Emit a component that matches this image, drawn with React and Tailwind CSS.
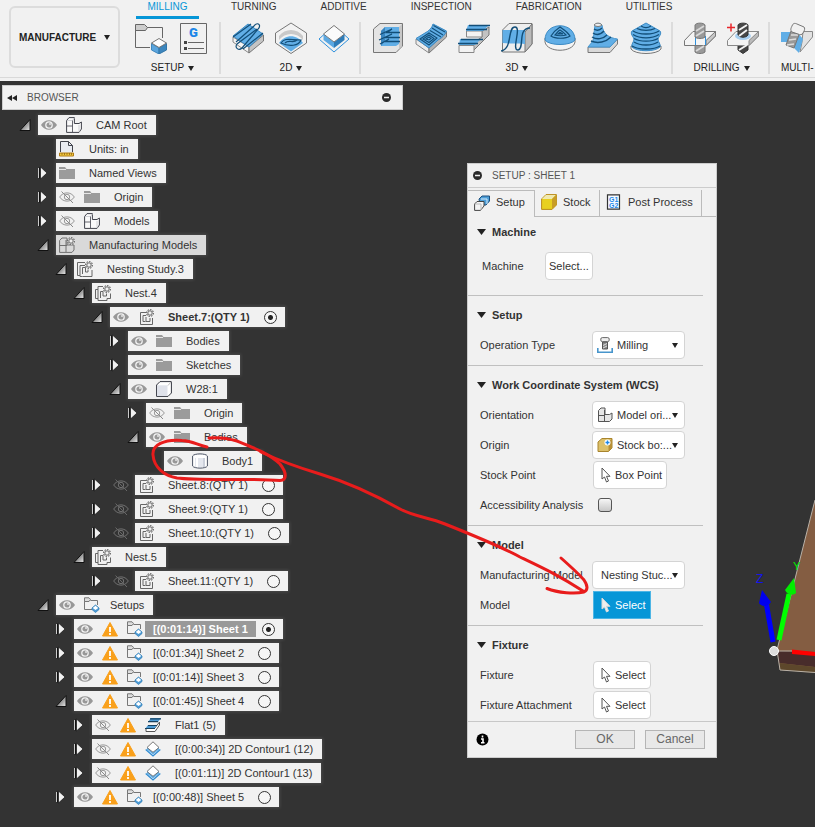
import { useState } from "react";

const tabs = ["MILLING", "TURNING", "ADDITIVE", "INSPECTION", "FABRICATION", "UTILITIES"];

function Svg({ size = 32, children }) {
  return (
    <svg width={size} height={size} viewBox={`0 0 ${size} ${size}`} fill="none" className="block shrink-0" aria-hidden="true">
      {children}
    </svg>
  );
}

/* ---------- toolbar icons (32px) ---------- */

function NewSetupIcon() {
  return (
    <Svg>
      <path d="M12 5.500H27.500V16M.5 5.500V25.500H15" stroke="#666" />
      <path d="M.5 2.500H9.500L12.500 5.500 10.500 8.500H.5Z" fill="#ccc" stroke="#666" />
      <path d="M16.500 21.500 24 26V32L16.500 28Z" fill="#5ba5dd" stroke="#3f87bd" />
      <path d="M31.500 21.500 24 26V32L31.500 28Z" fill="#3d86bd" stroke="#3276a8" />
      <path d="M16.500 21 24 16.500 31.500 21 24 25.500Z" fill="#fff" stroke="#777" />
    </Svg>
  );
}

function NcProgramIcon() {
  return (
    <Svg>
      <path d="M2.500 1.500H28.500V31.500H2.500Z" stroke="#666" />
      <text x="11" y="15" fontSize="13" fontWeight="900" fontFamily="Roboto, sans-serif" fill="#1c87e8">G</text>
      <path d="M6 19h3v3H6zM6 25h3v3H6z" fill="#444" />
      <path d="M10 20.500H26M10 26.500H26" stroke="#666" />
    </Svg>
  );
}

function FaceIcon() {
  return (
    <Svg>
      <path d="M1 15 17 25V31L1 20Z" fill="#f4f4f4" stroke="#888" />
      <path d="M17 25 31.500 13V19L17 31Z" fill="#c4c4c4" stroke="#777" />
      <path d="M1 14 16 2 31 12 17 25Z" fill="#61aee6" stroke="#3b8ac4" />
      <path d="M1 15 19 2M4 20 22 4C25 0 29 2 27 6L10 26C7 29 2 26 5 22L25 7M11 27 31 11" stroke="#124e78" strokeWidth="1.200" />
    </Svg>
  );
}

function PocketIcon() {
  return (
    <Svg>
      <path d="M16 1 31.500 11V21L16 31.500.5 21V11Z" fill="#f2f2f2" stroke="#777" />
      <path d="M4 14C10 6 22 6 28 14V18C22 10 10 10 4 18Z" fill="#c9c9c9" />
      <path d="M4 21C10 12 22 12 28 21L16 29.500Z" fill="#61aee6" />
      <path d="M6 21C10 15 15 18 26 18 24 24 14 25 6 21ZM10 21C14 17 18 22 22 18" stroke="#124e78" strokeWidth="1.200" />
    </Svg>
  );
}

function ContourIcon() {
  return (
    <Svg>
      <path d="M6 12.500 1 17 16 30 31 17 26 12.500" stroke="#2e90dc" />
      <path d="M5.500 12 16 20V26L5.500 18Z" fill="#5ba8e2" />
      <path d="M26.500 12 16 20V26L26.500 18Z" fill="#2e7cb8" />
      <path d="M5.500 12 16 3.500 26.500 12 16 20Z" fill="#fbfbfb" stroke="#777" />
    </Svg>
  );
}

function AdaptiveIcon() {
  return (
    <Svg>
      <path d="M1.500 7 8 1.500H30.500V24L24 30.500H1.500Z" fill="#e4e4e4" stroke="#777" />
      <path d="M30 2V24L27 27V5Z" fill="#c8c8c8" />
      <path d="M9 9 13 5H27V22L24 24H9Z" fill="#61aee6" />
      <path d="M9 9V24L13 19V5Z" fill="#3a86c0" />
      <path d="M28 10.500H15L20 7 8 12.500M28 15.500H13L20 12 7 18M28 19.500H13L17 17 8 22" stroke="#124e78" strokeWidth="1.300" />
    </Svg>
  );
}

function SteepIcon() {
  return (
    <Svg>
      <path d="M1 17 14 26V31L1 22Z" fill="#ececec" stroke="#888" />
      <path d="M14 26 31.500 10V15L14 31Z" fill="#b4b4b4" stroke="#777" />
      <path d="M1 16.500 10 11C14 9 17 6 18 2L31.500 9C30 13 27 16 23 18L14 26Z" fill="#61aee6" stroke="#3b8ac4" />
      <path d="M5 17 14 11 22 16 14 23ZM8 17 14 13 19 16.500 14 20.500ZM11 17 14 15 16 16.500 14 18ZM17 6 28 13M18.500 3.500 30 10M15 8.500 26 15" stroke="#124e78" strokeWidth="1.100" />
    </Svg>
  );
}

function FlatIcon() {
  return (
    <Svg>
      <path d="M31 5V13L14 30V24L18 19 24 15V9Z" fill="#c2c2c2" stroke="#777" />
      <path d="M8.500 9H24V15H8.500ZM1 23.500H16V30.500H1Z" fill="#f3f3f3" stroke="#888" />
      <path d="M10 3H31L25 9H8ZM2 17H23L17 23H1Z" fill="#61aee6" />
      <path d="M11 3.500H32M8 7.500H29M3 17.500H25M0 21.500H20" stroke="#124e78" strokeWidth="1.500" />
    </Svg>
  );
}

function ParallelIcon() {
  return (
    <Svg>
      <path d="M1.500 8 8 1.500H31V22L24 30H1.500Z" fill="#eee" stroke="#777" />
      <path d="M31 2V22L24 30V10Z" fill="#bababa" stroke="#777" />
      <path d="M1.500 8H24V22C16 21 10 22 1.500 21Z" fill="#61aee6" />
      <path d="M0 29C12 27 6 5 14 5 21 5 10 28 17 28 24 27 16 6 29 6" stroke="#124e78" strokeWidth="1.400" />
    </Svg>
  );
}

function ScallopIcon() {
  return (
    <Svg>
      <path d="M1 16V20C3 31 29 31 31 20V16Z" fill="#f4f4f4" stroke="#777" />
      <path d="M1 18C1-1 31-1 31 18 27 24 5 24 1 18Z" fill="#61aee6" stroke="#3b8ac4" />
      <path d="M7 14C10 9 13 7 16 5 19 7 23 9 26 14 22 17 11 17 7 14ZM11 13C13 11 14 9 16 8 18 9 20 11 22 13 20 14 13 14 11 13ZM14 12 16 10.500 19 12Z" stroke="#124e78" strokeWidth="1.200" />
    </Svg>
  );
}

function SpiralIcon() {
  return (
    <Svg>
      <path d="M1 25V30.500H23L30.500 22V17L23 25Z" fill="#d9d9d9" stroke="#777" />
      <path d="M1 25 6 19 8 3C10 1 13 1 15 3 16 12 22 16 30.500 17L23 25Z" fill="#61aee6" stroke="#4796cf" />
      <path d="M7 3C9 .5 13 .5 15 3 13 5 9 5 7 3Z" fill="#eee" stroke="#777" />
      <path d="M7 7C10 9 13 8 15 6M6 11C10 14 14 12 17 9M5 15C10 18 16 17 20 13M4 19C11 22 19 20 24 15" stroke="#124e78" strokeWidth="1.400" />
    </Svg>
  );
}

function RampIcon() {
  return (
    <Svg>
      <path d="M1 24V27C5 33 27 33 31 27V24Z" fill="#f1f1f1" stroke="#777" />
      <path d="M16 1 30 9C32 12 29 14 28 17 28 20 31 22 30 25 25 30 7 30 2 25 1 22 4 20 4 17 3 14 0 12 2 9Z" fill="#61aee6" stroke="#3b8ac4" />
      <path d="M11 4C14 6 18 6 21 4M7 6.500C12 9 20 9 25 6.500M3 9C9 13 23 13 29 9M3 12.500C10 17 22 17 29 12.500M4 16.500C10 20 22 20 28 16.500M4 20C10 24 22 24 28 20M2 24C8 28 24 28 30 24" stroke="#124e78" strokeWidth="1.300" />
    </Svg>
  );
}

function DrillIcon() {
  return (
    <Svg>
      <path d="M11 22H21V30C19 32 13 32 11 30Z" fill="#999" stroke="#777" />
      <path d="M.5 18.500 9 9.500H31.500V14L22 23.500H.5Z" fill="#f4f4f4" stroke="#777" />
      <path d="M22 18.500V23.500L31.500 14V9.500Z" fill="#c8c8c8" stroke="#777" />
      <path d="M11.500 14V23M21.500 14V23" stroke="#2e90dc" />
      <path d="M11 3C12 .5 20 .5 21 3V15C19 17 13 17 11 15Z" fill="#999" stroke="#777" />
      <path d="M12 9 20 4M12 14 20 9M12 29 20 24" stroke="#d8d8d8" strokeWidth="1.800" />
    </Svg>
  );
}

function HoleIcon() {
  return (
    <Svg>
      <path d="M11 22H21V28L16 31.500 11 28Z" fill="#444" stroke="#333" />
      <path d="M.5 18.500 9 9.500H31.500V14L22 23.500H.5Z" fill="#f4f4f4" stroke="#888" />
      <path d="M22 18.500V23.500L31.500 14V9.500Z" fill="#bbb" stroke="#888" />
      <ellipse cx="16" cy="14" rx="8" ry="4" fill="#a8cff0" />
      <path d="M11 3C12 .5 20 .5 21 3V13C19 16 13 16 11 13Z" fill="#474747" stroke="#333" />
      <path d="M12 8 20 3M12 14 20 8M12 28 20 23" stroke="#f3f3f3" strokeWidth="2" />
      <path d="M0 5.500H8M4 1.500V9.500" stroke="#e8262b" strokeWidth="1.500" />
    </Svg>
  );
}

function MultiAxisIcon() {
  return (
    <Svg>
      <path d="M22 9.500H31.500V15L19 30 21 20Z" fill="#e2e2e2" stroke="#888" />
      <path d="M0 10H16L22 17 18 31 10 23 8 20H0Z" fill="#61aee6" />
      <path d="M10 9 18 13 13 26 5 23Z" fill="#999" stroke="#777" />
      <path d="M8 18 15 17M6 23 13 22M10 13 17 13" stroke="#ddd" strokeWidth="1.500" />
      <path d="M11 4C12 1 14 1 16 2L23 5C24 6 24 8 22 11 21 13 19 13 17 12L11 10C9 8 10 6 11 4Z" fill="#f1f1f1" stroke="#777" />
    </Svg>
  );
}

/* ---------- browser tree icons (16px) ---------- */

function EyeIcon() {
  return (
    <Svg size={16}>
      <path d="M0 8C3.500 1.700 12.500 1.700 16 8 12.500 14.300 3.500 14.300 0 8Z" fill="#989898" />
      <circle cx="8" cy="8" r="3.200" fill="#989898" stroke="#f1f1f1" strokeWidth="1.300" />
      <circle cx="9" cy="7" r="1" fill="#e4e4e4" />
    </Svg>
  );
}

function EyeOffIcon() {
  return (
    <Svg size={16}>
      <path d="M.7 8C4 2.500 12 2.500 15.300 8 12 13.500 4 13.500.7 8Z" stroke="#999" />
      <circle cx="8" cy="8" r="2.700" stroke="#999" />
      <path d="M2.500 2.500 14 14" stroke="#8a8a8a" />
    </Svg>
  );
}

function FolderIcon() {
  return (
    <Svg size={16}>
      <path d="M0 2H6L7.500 4H16V14H0Z" fill="#9b9b9b" />
      <path d="M0 4.500H7" stroke="#e7e7e7" />
    </Svg>
  );
}

function ComponentIcon() {
  return (
    <Svg size={16}>
      <path d="M.6 3.500 3 .6H8.400V6.500H13L15.400 5V12L13 15.400H.6Z" fill="#fafafa" stroke="#41434c" strokeLinejoin="round" />
      <path d="M6.500 3V15M.6 9H6.500" stroke="#41434c" strokeWidth=".8" />
      <path d="M13 8V15M1 3.500H6.500L8.400 1" stroke="#c5c7cd" strokeWidth=".8" />
    </Svg>
  );
}

function UnitsIcon() {
  return (
    <Svg size={16}>
      <path d="M1.500 11V.5H9.500L13.500 4.500V11" fill="#e8ebf1" stroke="#41434c" />
      <path d="M9.500.5V4.500H13.500" stroke="#41434c" />
      <path d="M.5 12H14.500V15H.5Z" fill="#f1cb42" stroke="#b07a12" />
      <path d="M3 12V14M5.500 12V14M8 12V14M10.500 12V14M12.500 12V14" stroke="#8a5d0a" strokeWidth=".7" />
    </Svg>
  );
}

function Gear() {
  return (
    <>
      <circle cx="12" cy="4" r="3.400" fill="#f1f1f1" stroke="#6a6a6a" strokeWidth="1.200" strokeDasharray="1.600 1" />
      <circle cx="12" cy="4" r="2.200" fill="#f1f1f1" stroke="#6a6a6a" />
    </>
  );
}

function MfgModelsIcon() {
  return (
    <Svg size={16}>
      <path d="M.6 3.500 3 1H8V8H15V13L13 15.400H.6ZM.6 8.500H8M7 3V15" stroke="#707070" strokeLinejoin="round" />
      <Gear />
    </Svg>
  );
}

function StudyIcon() {
  return (
    <Svg size={16}>
      <path d="M3 14.500H.5V1.500H8M5.500 15.500H3V4.500H8M5.500 13V6.500H8.500V11H11V8.500M5.500 15.500H15V9" stroke="#666" />
      <Gear />
    </Svg>
  );
}

function NestIcon() {
  return (
    <Svg size={16}>
      <path d="M3 13.500H.5V4.500H3V1.500H8M3 4.500V15.500H12V13.500H15.500V8.500M5.500 13V6.500H8V11H11.500V8.500" stroke="#666" />
      <Gear />
    </Svg>
  );
}

function SheetIcon() {
  return (
    <Svg size={16}>
      <path d="M8 3.500H2.500V15.500H14.500V9M7.500 12.500H5V6.500H8M8 8V12.500H12V9" stroke="#666" />
      <Gear />
    </Svg>
  );
}

function BoxIcon() {
  return (
    <Svg size={16}>
      <path d="M.6 4 4 .6H15.400V12L12 15.400H.6Z" fill="#fff" stroke="#33363f" strokeLinejoin="round" />
      <path d="M1 4.300H11.500V15H1Z" fill="#dfe2ea" />
      <path d="M12 4.500 15.400.6" stroke="#bbb" />
    </Svg>
  );
}

function BodyIcon() {
  return (
    <Svg size={16}>
      <path d="M.6 3C2 .2 14 .2 15.400 3V13C14 15.800 2 15.800.6 13Z" fill="#fff" stroke="#4b5364" />
      <path d="M3 5H13V14H3Z" fill="#e4e7ee" />
      <path d="M5 5V14" stroke="#fff" strokeWidth="2" />
      <path d="M12 5V14" stroke="#b4bbc8" />
    </Svg>
  );
}

function SetupIcon() {
  return (
    <Svg size={16}>
      <path d="M6.500 3.500H13.500V8M.5 4V12.500H8" stroke="#777" />
      <path d="M.5.800H5L6.500 2.500 5 4.500H.5Z" fill="#ddd" stroke="#777" />
      <path d="M8 11 11.500 8 15 11V12.500L11.500 15.500 8 12.500Z" fill="#4c9bd6" stroke="#3480b8" strokeWidth=".8" />
      <path d="M8.800 11 11.500 8.800 14.200 11 11.500 13Z" fill="#fff" />
    </Svg>
  );
}

function WarningIcon() {
  return (
    <Svg size={16}>
      <path d="M8 1.500 15.500 15H.5Z" fill="#f9a01b" stroke="#f9a01b" strokeLinejoin="round" />
      <path d="M8 6V11M8 12V14" stroke="#fff" strokeWidth="1.800" />
    </Svg>
  );
}

function FlatOpIcon() {
  return (
    <Svg size={16}>
      <path d="M1 11.500H9.500L14.500 5V8L10 14.500H1Z" fill="#fff" stroke="#555" />
      <path d="M6 1H16L13 5H3ZM3 8H12L9 12H0Z" fill="#4c9bd6" />
      <path d="M5 1.800H16M3 4.700H13M3 8.500H12M0 11.500H10" stroke="#17415f" strokeWidth="1.200" />
    </Svg>
  );
}

function ContourOpIcon() {
  return (
    <Svg size={16}>
      <path d="M.7 8.500 8 15 15.300 8.500" stroke="#2e8bd2" strokeWidth="1.300" />
      <path d="M2 6V8.500L8 13.500 14 8.500V6" fill="#5faee8" />
      <path d="M2 6.500 8 .8 14 6.500 8 11.300Z" fill="#fff" stroke="#777" />
    </Svg>
  );
}

/* ---------- small shared glyphs ---------- */

function DownArrow({ className = "w-[6px] h-[5px]" }) {
  return (
    <svg viewBox="0 0 8 6" className={`${className} shrink-0`} preserveAspectRatio="none" aria-hidden="true">
      <path d="M0 0H8L4 6Z" fill="#222" />
    </svg>
  );
}

function MinusDot() {
  return (
    <svg width="9" height="9" viewBox="0 0 9 9" aria-hidden="true">
      <circle cx="4.500" cy="4.500" r="4.500" fill="#2b2b2b" />
      <path d="M2 4.500H7" stroke="#f1f1f1" strokeWidth="1.500" />
    </svg>
  );
}

function CursorIcon({ active }) {
  return (
    <svg width="10" height="16" viewBox="0 0 10 16" className="shrink-0" aria-hidden="true">
      <path d="M1 1V12L3.500 10 5.500 15 7.500 14 5.500 9.300H9Z" fill={active ? "#eee" : "#fff"} stroke={active ? "#d8d8d8" : "#555"} />
    </svg>
  );
}

const groups = [
  { label: "SETUP", icons: [NewSetupIcon, NcProgramIcon] },
  { label: "2D", icons: [FaceIcon, PocketIcon, ContourIcon] },
  { label: "3D", icons: [AdaptiveIcon, SteepIcon, FlatIcon, ParallelIcon, ScallopIcon, SpiralIcon, RampIcon] },
  { label: "DRILLING", icons: [DrillIcon, HoleIcon] },
];

function Toolbar() {
  return (
    <header className="flex bg-[#f1f1f1] pb-[3px] overflow-hidden">
      <div className="flex flex-1 min-w-0 border-b border-[#d9d9d9] h-[78px]">
        <button className="ml-[9px] mt-[6px] w-[111px] h-[62px] shrink-0 rounded-md border-2 border-[#dcdcdc] flex items-center justify-center gap-2 text-[10px] font-bold text-[#222]">
          MANUFACTURE
          <DownArrow />
        </button>
        <div className="flex-1 min-w-0 pl-[15px]">
          <nav className="flex gap-11 h-[19px] pl-px text-[10px] leading-[14px]">
            {tabs.map((t, i) => (
              <a
                key={t}
                href="#"
                className={
                  i === 0
                    ? "w-[63px] -mr-3 text-center text-[#0696d7] border-b-[3px] border-[#0696d7]"
                    : "text-[#333]"
                }
              >
                {t}
              </a>
            ))}
          </nav>
          <div className="flex pt-[3px]">
            {groups.map((g) => (
              <div key={g.label} className="shrink-0 border-r-2 border-[#dcdcdc] pr-[9px] mr-[11px] h-[52px]">
                <div className="flex gap-[11px]">
                  {g.icons.map((Icon, i) => (
                    <button key={i} aria-label={`${g.label} ${i + 1}`}>
                      <Icon />
                    </button>
                  ))}
                </div>
                <button className="mx-auto flex items-center gap-1 pt-[7px] text-[10px] leading-[14px] text-[#222]">
                  {g.label}
                  <DownArrow />
                </button>
              </div>
            ))}
            <div className="shrink-0">
              <button aria-label="Multi-axis" className="block">
                <MultiAxisIcon />
              </button>
              <div className="pt-[7px] text-[10px] leading-[14px] text-[#222]">MULTI-</div>
            </div>
          </div>
        </div>
      </div>
    </header>
  );
}

const E = EyeIcon;
const H = EyeOffIcon;
const W = WarningIcon;

const tree = {
  label: "CAM Root", icons: [E, ComponentIcon], open: true,
  children: [
    { label: "Units: in", icons: [UnitsIcon] },
    { label: "Named Views", icons: [FolderIcon], open: false },
    { label: "Origin", icons: [H, FolderIcon], open: false },
    { label: "Models", icons: [H, ComponentIcon], open: false },
    {
      label: "Manufacturing Models", icons: [MfgModelsIcon], open: true, shaded: true,
      children: [
        {
          label: "Nesting Study.3", icons: [StudyIcon], open: true,
          children: [
            {
              label: "Nest.4", icons: [NestIcon], open: true,
              children: [
                {
                  label: "Sheet.7:(QTY 1)", icons: [E, SheetIcon], open: true, bold: true, radio: "sheet", on: true,
                  children: [
                    { label: "Bodies", icons: [E, FolderIcon], open: false },
                    { label: "Sketches", icons: [E, FolderIcon], open: false },
                    {
                      label: "W28:1", icons: [E, BoxIcon], open: true,
                      children: [
                        { label: "Origin", icons: [H, FolderIcon], open: false },
                        {
                          label: "Bodies", icons: [E, FolderIcon], open: true,
                          children: [{ label: "Body1", icons: [E, BodyIcon] }],
                        },
                      ],
                    },
                  ],
                },
                { label: "Sheet.8:(QTY 1)", icons: [SheetIcon], open: false, off: true, radio: "sheet" },
                { label: "Sheet.9:(QTY 1)", icons: [SheetIcon], open: false, off: true, radio: "sheet" },
                { label: "Sheet.10:(QTY 1)", icons: [SheetIcon], open: false, off: true, radio: "sheet" },
              ],
            },
            {
              label: "Nest.5", icons: [NestIcon], open: true,
              children: [{ label: "Sheet.11:(QTY 1)", icons: [SheetIcon], open: false, off: true, radio: "sheet" }],
            },
          ],
        },
      ],
    },
    {
      label: "Setups", icons: [E, SetupIcon], open: true, tight: true,
      children: [
        { label: "[(0:01:14)] Sheet 1", icons: [E, W, SetupIcon], open: false, tight: true, bold: true, selected: true, radio: "setup", on: true },
        { label: "[(0:01:34)] Sheet 2", icons: [E, W, SetupIcon], open: false, tight: true, radio: "setup" },
        { label: "[(0:01:14)] Sheet 3", icons: [E, W, SetupIcon], open: false, tight: true, radio: "setup" },
        {
          label: "[(0:01:45)] Sheet 4", icons: [E, W, SetupIcon], open: true, tight: true, radio: "setup",
          children: [
            { label: "Flat1 (5)", icons: [H, W, FlatOpIcon], open: false },
            { label: "[(0:00:34)] 2D Contour1 (12)", icons: [H, W, ContourOpIcon], open: false },
            { label: "[(0:01:11)] 2D Contour1 (13)", icons: [H, W, ContourOpIcon], open: false },
          ],
        },
        { label: "[(0:00:48)] Sheet 5", icons: [E, W, SetupIcon], open: false, tight: true, radio: "setup" },
      ],
    },
  ],
};

function Caret({ open }) {
  return (
    <svg width="12" height="14" viewBox="0 0 12 14" aria-hidden="true">
      <defs>
        <linearGradient id="caretFill" x1="0" y1="0" x2="1" y2="1">
          <stop offset="0.3" stopColor="#666" />
          <stop offset="1" stopColor="#eee" />
        </linearGradient>
      </defs>
      {open ? (
        <path d="M11 1.500V12.500H1Z" fill="url(#caretFill)" stroke="#111" />
      ) : (
        <>
          <path d="M3.500 1V13L10 7Z" fill="#f1f1f1" stroke="#111" strokeWidth=".7" />
          <path d="M1.500 2V12" stroke="#ccc" />
          <path d="M2.500 1.500V12.500" stroke="#111" />
        </>
      )}
    </svg>
  );
}

function TreeNode({ node, path }) {
  const [open, setOpen] = useState(node.open);
  const id = `node-${path}`;
  return (
    <li>
      <div className="flex items-center h-6">
        <div className="w-[19px] shrink-0">
          {node.open !== undefined && (
            <button className="block" aria-label={`Toggle ${node.label}`} onClick={() => setOpen(!open)}>
              <Caret open={open} />
            </button>
          )}
        </div>
        {node.off && (
          <div className="pl-[3px] pr-[6px] opacity-60">
            <EyeOffIcon />
          </div>
        )}
        <div
          className={`flex items-center h-5 pl-[3px] whitespace-nowrap shadow-[0_0_3px_1px_rgba(255,255,255,0.12)] ${
            node.shaded ? "bg-[#d9d9d9]" : "bg-[#f1f1f1]"
          }`}
        >
          <div className="flex gap-[9px]">
            {node.icons.map((Icon, i) => (
              <Icon key={i} />
            ))}
          </div>
          <label
            htmlFor={node.radio ? id : undefined}
            className={`px-2 leading-4 ${node.tight ? "ml-[2px]" : "ml-[6px]"} ${node.bold ? "font-bold" : ""} ${
              node.selected ? "bg-[#999] text-white" : "text-[#333]"
            }`}
          >
            {node.label}
          </label>
          {node.radio ? (
            <input
              id={id}
              type="radio"
              name={node.radio}
              defaultChecked={node.on}
              className="appearance-none w-[13px] h-[13px] ml-[6px] mr-2 rounded-full border border-[#333] bg-[#f6f6f6] checked:bg-[radial-gradient(circle,#222_2px,#f6f6f6_3px)]"
            />
          ) : (
            <span className="w-px" />
          )}
        </div>
      </div>
      {open && node.children && (
        <ul className="pl-[18px]">
          {node.children.map((c, i) => (
            <TreeNode key={i} node={c} path={`${path}-${i}`} />
          ))}
        </ul>
      )}
    </li>
  );
}

function Browser() {
  return (
    <aside className="w-[403px] shrink-0 pt-1">
      <div className="ml-[2px] h-[25px] flex items-center bg-[#f1f1f1] border border-[#ccc] pl-1 pr-[11px] text-[10px] text-[#555]">
        <button aria-label="Collapse browser" className="mr-[10px]">
          <svg width="10" height="6" viewBox="0 0 10 6" aria-hidden="true">
            <path d="M5 0V6L0 3ZM10 0V6L5 3Z" fill="#222" />
          </svg>
        </button>
        <span className="flex-1">BROWSER</span>
        <button aria-label="Minimize">
          <MinusDot />
        </button>
      </div>
      <ul className="pl-[19px] pt-[3px]">
        <TreeNode node={tree} path="0" />
      </ul>
    </aside>
  );
}

function Section({ title, className = "pt-1 pb-[5px] border-b", children }) {
  return (
    <section className={`mr-[13px] border-[#c0c0c0] ${className}`}>
      <h3 className="h-[30px] flex items-center gap-[6px] pl-[9px] font-bold">
        <DownArrow className="w-[9px] h-[6px]" />
        {title}
      </h3>
      {children}
    </section>
  );
}

function Field({ label, id, children }) {
  return (
    <div className="flex items-center h-[30px] pl-3">
      <label htmlFor={id} className="w-[112px] shrink-0 whitespace-nowrap">
        {label}
      </label>
      {children}
    </div>
  );
}

function Dropdown({ id, icon, value }) {
  return (
    <div className="relative w-[93px] h-7 flex items-center rounded-sm border border-[#d4d4d4] bg-white pl-1">
      {icon}
      <select id={id} className="appearance-none bg-transparent flex-1 min-w-0 h-full outline-none pl-1">
        <option>{value}</option>
      </select>
      <DownArrow className="w-[6px] h-[5px] absolute right-[6px] pointer-events-none" />
    </div>
  );
}

function PickButton({ id, active, children }) {
  return (
    <button
      id={id}
      className={`ml-px h-7 flex items-center gap-1 pl-[7px] pr-1 border ${
        active ? "bg-[#0696d7] border-[#4db5e5] text-white" : "rounded-sm bg-white border-[#d4d4d4]"
      }`}
    >
      <CursorIcon active={active} />
      {children}
    </button>
  );
}

function SetupDialog() {
  return (
    <div role="dialog" aria-label="Setup : Sheet 1" className="w-[250px] shrink-0 ml-16 mt-[82px] self-start bg-[#f1f1f1] border border-[#ccc] text-[#333]">
      <div className="h-6 flex items-center gap-[10px] pl-[5px] border-b border-[#ccc] text-[10px] text-[#555]">
        <MinusDot />
        SETUP : SHEET 1
      </div>
      <div role="tablist" className="flex h-[29px] pt-[2px]">
        <button role="tab" aria-selected="true" className="flex items-center gap-[6px] pl-[6px] pb-[3px] w-[67px] border-t border-r border-[#bbb]">
          <Svg size={16}>
            <path d="M5 4 8 1H15.500V6L12 10H6Z" fill="#4e9fd8" stroke="#1c4f7c" />
            <path d="M7 4H13V9" stroke="#d6eafa" />
            <path d="M.6 9 3 6.500H10V11L6.500 15.400H.6Z" fill="#f4f4f4" stroke="#444" />
            <path d="M.6 9H7V15" stroke="#bbb" />
          </Svg>
          Setup
        </button>
        <button role="tab" className="flex items-center gap-[6px] pl-[6px] pb-[2px] w-[65px] border-b border-r border-[#bbb]">
          <Svg size={16}>
            <path d="M.6 5 5 .6H15.400V11L11 15.400H.6Z" fill="#e8d020" stroke="#b98b1e" />
            <path d="M1 5 5 1H15L11 5Z" fill="#f0e9b0" />
            <path d="M11 5 15.400.6V11L11 15.400Z" fill="#c89d27" />
          </Svg>
          Stock
        </button>
        <button role="tab" className="flex items-center gap-[6px] pl-[6px] pb-[2px] w-[102px] whitespace-nowrap border-b border-r border-[#bbb]">
          <Svg size={16}>
            <path d="M1.500.8H13.500V15.200H1.500Z" fill="#f6faff" stroke="#333" strokeWidth="1.200" />
            <text x="3" y="7.500" fontSize="7" fontWeight="700" fontFamily="Liberation Sans, sans-serif" fill="#1c87e8">G1</text>
            <text x="3" y="14" fontSize="7" fontWeight="700" fontFamily="Liberation Sans, sans-serif" fill="#1c87e8">G2</text>
          </Svg>
          Post Process
        </button>
        <span className="flex-1 border-b border-[#bbb]" />
      </div>

      <Section title="Machine" className="pb-[10px] border-b">
        <div className="flex items-center h-[38px] pl-[14px]">
          <label htmlFor="machine" className="w-[63px]">
            Machine
          </label>
          <button id="machine" className="h-7 px-[3px] rounded-sm border border-[#d4d4d4] bg-white">
            Select...
          </button>
        </div>
      </Section>

      <Section title="Setup">
        <Field label="Operation Type" id="op">
          <Dropdown
            id="op"
            value="Milling"
            icon={
              <Svg size={16}>
                <path d="M.800 11V15.200H15.200V11" stroke="#4795cc" strokeWidth="1.600" />
                <path d="M5.500 5H10.500V12H5.500Z" fill="#888" stroke="#555" />
                <path d="M6 8.500 10 6.500M6 11 10 9" stroke="#ddd" />
                <rect x="3.800" y=".6" width="8.400" height="4" rx="1.500" fill="#eee" stroke="#666" />
              </Svg>
            }
          />
        </Field>
      </Section>

      <Section title="Work Coordinate System (WCS)">
        <Field label="Orientation" id="orient">
          <Dropdown
            id="orient"
            value="Model ori..."
            icon={
              <Svg size={16}>
                <path d="M1.500 3.500 4 1H8V7.500H12.500L15 6V12L12.500 14.500H1.500Z" fill="#e6e6e6" stroke="#555" strokeLinejoin="round" />
                <path d="M7.500 3V14.500M1.500 8.500H8" stroke="#555" />
              </Svg>
            }
          />
        </Field>
        <Field label="Origin" id="origin">
          <Dropdown
            id="origin"
            value="Stock bo:..."
            icon={
              <Svg size={16}>
                <path d="M1 5 5 1.500H15V11L11.500 14.500H1Z" fill="#dcc06a" stroke="#a8842d" />
                <path d="M11.500 5 15 1.500V11L11.500 14.500Z" fill="#b89036" />
                <circle cx="10.500" cy="5.500" r="3" fill="#fff" />
                <path d="M10.500 3.500V7.500M8.500 5.500H12.500" stroke="#1c87e8" strokeWidth="1.400" />
              </Svg>
            }
          />
        </Field>
        <Field label="Stock Point" id="stock-point">
          <PickButton id="stock-point">Box Point</PickButton>
        </Field>
        <Field label="Accessibility Analysis" id="access">
          <input
            id="access"
            type="checkbox"
            className="appearance-none ml-[6px] w-[14px] h-[14px] rounded-[3px] border border-[#555] bg-linear-to-b from-[#f6f6f6] to-[#c8c8c8] checked:to-[#0696d7]"
          />
        </Field>
      </Section>

      <Section title="Model">
        <Field label="Manufacturing Model" id="mfg-model">
          <Dropdown id="mfg-model" value="Nesting Stuc..." />
        </Field>
        <Field label="Model" id="model">
          <PickButton id="model" active>
            Select
          </PickButton>
        </Field>
      </Section>

      <Section title="Fixture" className="pt-1 pb-px">
        <Field label="Fixture" id="fixture">
          <PickButton id="fixture">Select</PickButton>
        </Field>
        <Field label="Fixture Attachment" id="fixture-att">
          <PickButton id="fixture-att">Select</PickButton>
        </Field>
      </Section>

      <div className="flex items-center h-9 border-t border-[#c8c8c8] pl-2 pr-[11px] text-[12px] text-[#666]">
        <button aria-label="Info" className="mr-auto">
          <svg width="13" height="13" viewBox="0 0 13 13" aria-hidden="true">
            <circle cx="6.500" cy="6.500" r="6" fill="#000" />
            <path d="M6.500 2.500V4.500M5 6H7V9.500M5 9.800H8.500" stroke="#fff" strokeWidth="1.600" />
          </svg>
        </button>
        <button className="w-[60px] h-[19px] border border-[#b5b5b5] bg-[#e8e8e8] leading-[17px]">OK</button>
        <button className="w-[60px] h-[19px] ml-[10px] border border-[#b5b5b5] bg-[#e8e8e8] leading-[17px]">Cancel</button>
      </div>
    </div>
  );
}

// Corner of the stock with the WCS triad
function ModelView() {
  return (
    <svg width="65" height="190" viewBox="750 490 65 190" className="absolute right-0 top-[409px]" aria-hidden="true">
      <path d="M815 500 777 650 780 670 815 672Z" fill="#845d42" />
      <path d="M777 651 815 652V667L779 663Z" fill="#482c2b" />
      <path d="M779 663 815 667V673L780 670Z" fill="#5d472b" />
      <path d="M815 500 777 650 780 670 815 672.500M777 651H792" stroke="#b9b2a8" strokeWidth="1" fill="none" />
      <path d="M792 649.500 815 652V656L792 654Z" fill="#f00" />
      <path d="M779 640 789 594" stroke="#0f0" strokeWidth="5" />
      <path d="M794 578 785 590C787 595 793 596 796 593Z" fill="#0e0" />
      <path d="M773 642 766 602" stroke="#00f" strokeWidth="5" />
      <path d="M762 590 759 603C761 607 768 607 771 602Z" fill="#00e" />
      <circle cx="774" cy="651" r="4.500" fill="#ddd" stroke="#fff" />
      <text x="756" y="583" fontSize="12" fontFamily="Liberation Sans, sans-serif" fill="#1414f0">Z</text>
      <text x="793" y="570" fontSize="11" fontFamily="Liberation Sans, sans-serif" fill="#0e0">Y</text>
    </svg>
  );
}

// Hand-drawn note from Body1 to the Model picker
function Markup() {
  return (
    <svg width="480" height="180" viewBox="140 430 480 180" className="absolute left-[140px] top-[349px] pointer-events-none" fill="none" aria-hidden="true">
      <g stroke="#e81c1c" strokeWidth="3" strokeLinecap="round" strokeLinejoin="round">
        <path d="M207 447C197 445 193 441 182 440.500C164 439 152 445 153 455C154 468 165 476 177 478C200 481 250 478 280 480.500C287 480 287 473 280 464C270 454 252 447 237 441C227 438 218 437 209 438" />
        <path d="M261 452C280 461 300 468 320 474C350 483 375 495 400 509C415 517 428 517 445 524C475 536 500 546 520 557C545 569 560 576 583 591" />
        <path d="M561 558C570 566 579 574 584 580C588 586 588 590 584 592C575 594 558 593 547 588.500" />
      </g>
    </svg>
  );
}

function App() {
  return (
    <div className="min-h-screen bg-[#333] overflow-hidden text-[11px] font-['Liberation_Sans',Arial,sans-serif]">
      <Toolbar />
      <main className="relative flex min-h-[746px]">
        <Browser />
        <SetupDialog />
        <ModelView />
        <Markup />
      </main>
    </div>
  );
}

export default App;
